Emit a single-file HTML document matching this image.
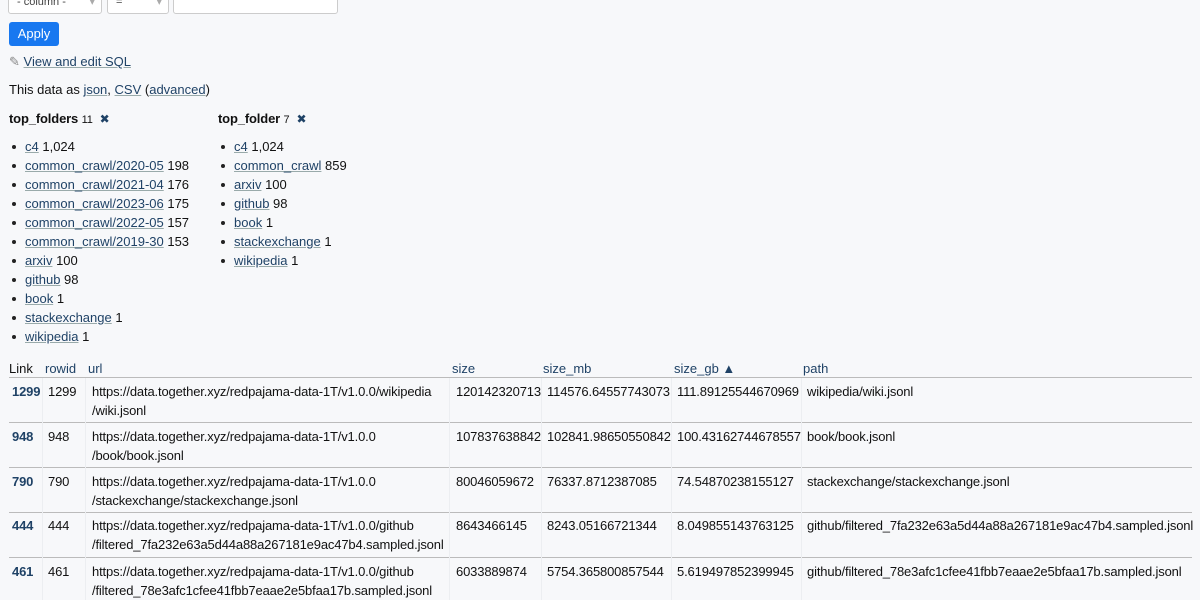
<!DOCTYPE html>
<html><head><style>
body{margin:0;width:1200px;height:600px;overflow:hidden;background:#f7f8fa;font-family:"Liberation Sans",sans-serif;font-size:13px;color:#111;position:relative}
.a{position:absolute;white-space:nowrap;line-height:19px}
a{color:#1f4266;text-decoration:underline;text-decoration-color:#9aa}
.sel{position:absolute;top:-8px;height:22px;border:1px solid #ccc;border-radius:3px;background:#fff;font-size:11px;color:#444;line-height:18px;padding-left:8px;box-sizing:border-box}
.btn{position:absolute;left:9px;top:22px;width:50px;height:24px;background:#1878f0;color:#fff;border-radius:3px;text-align:center;line-height:24px;font-size:13px}
ul{margin:0;padding:0;list-style:none}
li{position:relative;padding-left:16px;line-height:19px}
li:before{content:"";position:absolute;left:3px;top:8px;width:4px;height:4px;border-radius:50%;background:#222}
.h{font-weight:bold}
.x{color:#1f4266;font-size:12px}
.hl{position:absolute;left:9px;right:8px;height:1px;background:#bbb}
.vl{position:absolute;top:378px;bottom:0;width:1px;background:#eceef1}
.th{color:#1f4266}
.t{letter-spacing:-0.15px}
</style></head><body>
<div class="sel" style="left:8px;width:94px">- column - <span style="position:absolute;right:6px;color:#aaa">▾</span></div>
<div class="sel" style="left:107px;width:62px">= <span style="position:absolute;right:6px;color:#aaa">▾</span></div>
<div class="sel" style="left:173px;width:165px"></div>
<div class="btn">Apply</div>
<div class="a" style="left:9px;top:52px"><span style="color:#888">✎</span> <a>View and edit SQL</a></div>
<div class="a" style="left:9px;top:80px">This data as <a>json</a>, <a>CSV</a> (<a>advanced</a>)</div>
<div class="a t" style="left:9px;top:109px"><span class="h">top_folders</span> <span style="font-size:11px">11</span> &nbsp;<span class="x">✖</span></div>
<div class="a t" style="left:218px;top:109px"><span class="h">top_folder</span> <span style="font-size:11px">7</span> &nbsp;<span class="x">✖</span></div>
<ul class="a" style="left:9px;top:137px">
<li><a>c4</a> 1,024</li><li><a>common_crawl/2020-05</a> 198</li><li><a>common_crawl/2021-04</a> 176</li><li><a>common_crawl/2023-06</a> 175</li><li><a>common_crawl/2022-05</a> 157</li><li><a>common_crawl/2019-30</a> 153</li><li><a>arxiv</a> 100</li><li><a>github</a> 98</li><li><a>book</a> 1</li><li><a>stackexchange</a> 1</li><li><a>wikipedia</a> 1</li></ul>
<ul class="a" style="left:218px;top:137px">
<li><a>c4</a> 1,024</li><li><a>common_crawl</a> 859</li><li><a>arxiv</a> 100</li><li><a>github</a> 98</li><li><a>book</a> 1</li><li><a>stackexchange</a> 1</li><li><a>wikipedia</a> 1</li></ul>

<div class="a" style="left:9px;top:359px">Link</div>
<div class="a th" style="left:45px;top:359px">rowid</div>
<div class="a th" style="left:88px;top:359px">url</div>
<div class="a th" style="left:452px;top:359px">size</div>
<div class="a th" style="left:543px;top:359px">size_mb</div>
<div class="a th" style="left:674px;top:359px">size_gb ▲</div>
<div class="a th" style="left:803px;top:359px">path</div>
<div class="hl" style="top:377px"></div>
<div class="hl" style="top:422px"></div>
<div class="hl" style="top:467px"></div>
<div class="hl" style="top:512px"></div>
<div class="hl" style="top:557px"></div>
<div class="vl" style="left:42px"></div><div class="vl" style="left:85px"></div><div class="vl" style="left:449px"></div><div class="vl" style="left:541px"></div><div class="vl" style="left:671px"></div><div class="vl" style="left:801px"></div>

<div class="t">
<div class="a" style="left:12px;top:382px"><a class="h" style="text-decoration:none">1299</a></div><div class="a" style="left:48px;top:382px">1299</div>
<div class="a" style="left:92px;top:382px">https://data.together.xyz/redpajama-data-1T/v1.0.0/wikipedia<br>/wiki.jsonl</div>
<div class="a" style="left:456px;top:382px">120142320713</div><div class="a" style="left:547px;top:382px">114576.64557743073</div><div class="a" style="left:677px;top:382px">111.89125544670969</div><div class="a" style="left:807px;top:382px">wikipedia/wiki.jsonl</div>

<div class="a" style="left:12px;top:427px"><a class="h" style="text-decoration:none">948</a></div><div class="a" style="left:48px;top:427px">948</div>
<div class="a" style="left:92px;top:427px">https://data.together.xyz/redpajama-data-1T/v1.0.0<br>/book/book.jsonl</div>
<div class="a" style="left:456px;top:427px">107837638842</div><div class="a" style="left:547px;top:427px">102841.98650550842</div><div class="a" style="left:677px;top:427px">100.43162744678557</div><div class="a" style="left:807px;top:427px">book/book.jsonl</div>

<div class="a" style="left:12px;top:472px"><a class="h" style="text-decoration:none">790</a></div><div class="a" style="left:48px;top:472px">790</div>
<div class="a" style="left:92px;top:472px">https://data.together.xyz/redpajama-data-1T/v1.0.0<br>/stackexchange/stackexchange.jsonl</div>
<div class="a" style="left:456px;top:472px">80046059672</div><div class="a" style="left:547px;top:472px">76337.8712387085</div><div class="a" style="left:677px;top:472px">74.54870238155127</div><div class="a" style="left:807px;top:472px">stackexchange/stackexchange.jsonl</div>

<div class="a" style="left:12px;top:516px"><a class="h" style="text-decoration:none">444</a></div><div class="a" style="left:48px;top:516px">444</div>
<div class="a" style="left:92px;top:516px">https://data.together.xyz/redpajama-data-1T/v1.0.0/github<br>/filtered_7fa232e63a5d44a88a267181e9ac47b4.sampled.jsonl</div>
<div class="a" style="left:456px;top:516px">8643466145</div><div class="a" style="left:547px;top:516px">8243.05166721344</div><div class="a" style="left:677px;top:516px">8.049855143763125</div><div class="a" style="left:807px;top:516px">github/filtered_7fa232e63a5d44a88a267181e9ac47b4.sampled.jsonl</div>

<div class="a" style="left:12px;top:562px"><a class="h" style="text-decoration:none">461</a></div><div class="a" style="left:48px;top:562px">461</div>
<div class="a" style="left:92px;top:562px">https://data.together.xyz/redpajama-data-1T/v1.0.0/github<br>/filtered_78e3afc1cfee41fbb7eaae2e5bfaa17b.sampled.jsonl</div>
<div class="a" style="left:456px;top:562px">6033889874</div><div class="a" style="left:547px;top:562px">5754.365800857544</div><div class="a" style="left:677px;top:562px">5.619497852399945</div><div class="a" style="left:807px;top:562px">github/filtered_78e3afc1cfee41fbb7eaae2e5bfaa17b.sampled.jsonl</div>
</div>
</body></html>
